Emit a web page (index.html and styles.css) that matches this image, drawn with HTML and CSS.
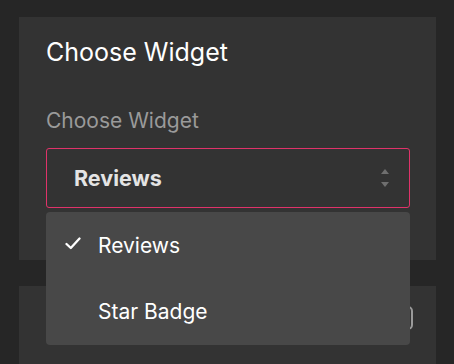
FILE: index.html
```html
<!DOCTYPE html>
<html>
<head>
<meta charset="utf-8">
<link rel="stylesheet" href="styles.css">
</head>
<body>
<div class="page">
  <section class="card card-top">
    <h2 class="title">Choose Widget</h2>
    <div class="label">Choose Widget</div>
    <div class="select-wrap">
      <div class="select">
        <span class="select-value">Reviews</span>
        <span class="arrows">
          <svg width="8" height="18" viewBox="0 0 8 18"><path d="M4 0 L8 5 L0 5 Z" fill="#6f6f6f"/><path d="M0 13 L8 13 L4 18 Z" fill="#6f6f6f"/></svg>
        </span>
      </div>
      <div class="menu">
        <div class="item">
          <span class="check"><svg width="16" height="13" viewBox="0 0 16 13"><path d="M1.5 7 L5.8 11 L14.5 1.5" fill="none" stroke="#ffffff" stroke-width="2.3" stroke-linecap="round" stroke-linejoin="round"/></svg></span>
          <span class="item-text">Reviews</span>
        </div>
        <div class="item">
          <span class="check"></span>
          <span class="item-text">Star Badge</span>
        </div>
      </div>
    </div>
  </section>
  <section class="card card-bottom">
    <div class="row">
      <div class="ghost-box"></div>
    </div>
  </section>
</div>
</body>
</html>
```
FILE: styles.css
```css
html, body {
  margin: 0;
  padding: 0;
  background: #262626;
  font-family: "Inter", "Noto Sans", sans-serif;
  overflow: hidden;
}
.page {
  padding: 17px 18px 0 19px;
  display: flex;
  flex-direction: column;
  gap: 26px;
}
.card {
  background: #333333;
}
.card-top {
  height: 243px;
  box-sizing: border-box;
  padding: 20px 26px 0 27px;
  position: relative;
  z-index: 2;
}
.title {
  margin: 0;
  font-size: 25px;
  font-weight: 400;
  color: #ffffff;
  line-height: 30px;
}
.label {
  margin-top: 42px;
  font-size: 21px;
  color: #9a9a9a;
  line-height: 24px;
}
.select-wrap {
  position: relative;
  margin-top: 15px;
}
.select {
  height: 60px;
  box-sizing: border-box;
  border: 1px solid #e0336a;
  border-radius: 3px;
  display: flex;
  align-items: center;
  justify-content: space-between;
  padding: 0 20px 0 27px;
}
.select-value {
  font-size: 21.5px;
  font-weight: 700;
  color: #e4e4e4;
}
.arrows {
  display: flex;
}
.menu {
  position: absolute;
  left: 0;
  right: 0;
  top: 64px;
  padding-bottom: 1px;
  background: #484848;
  border-radius: 4px;
  display: flex;
  flex-direction: column;
}
.item {
  height: 66px;
  display: flex;
  align-items: center;
  padding-left: 19px;
}
.check {
  width: 33px;
  display: flex;
  align-items: center;
  margin-top: -3px;
}
.item-text {
  font-size: 21px;
  color: #ffffff;
}
.card-bottom {
  height: 100px;
  padding: 20px 23px 0 0;
}
.row {
  display: flex;
  justify-content: flex-end;
}
.ghost-box {
  width: 30px;
  height: 20px;
  border: 2px solid #9a9a9a;
  border-radius: 5px;
}
```
